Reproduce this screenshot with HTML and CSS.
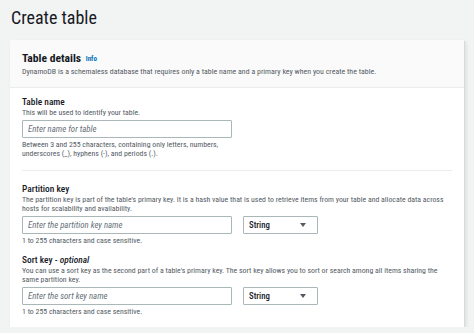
FILE: index.html
```html
<!DOCTYPE html>
<html lang="en">

<head>
    <meta charset="UTF-8">
    <meta name="viewport" content="width=device-width, initial-scale=1.0">
    <title>Create table</title>
    <link rel="stylesheet" href="styles.css">
</head>

<body>
    <main class="page">
        <h1 class="page-title">Create table</h1>

        <section class="card">
            <header class="card-header">
                <h2>Table details <a href="#" class="info">Info</a></h2>
                <p>DynamoDB is a schemaless database that requires only a table name and a primary key when you create the table.</p>
            </header>

            <div class="card-body">
                <div class="field">
                    <label class="label">Table name</label>
                    <p class="desc">This will be used to identify your table.</p>
                    <div class="control">
                        <input type="text" class="input" placeholder="Enter name for table">
                    </div>
                    <p class="hint">Between 3 and 255 characters, containing only letters, numbers,<br>underscores (_), hyphens (-), and periods (.).</p>
                </div>

                <hr class="divider">

                <div class="field">
                    <label class="label">Partition key</label>
                    <p class="desc">The partition key is part of the table's primary key. It is a hash value that is used to retrieve items from your table and allocate data across hosts for scalability and availability.</p>
                    <div class="control">
                        <input type="text" class="input" placeholder="Enter the partition key name">
                        <div class="select">String <span class="caret"></span></div>
                    </div>
                    <p class="hint">1 to 255 characters and case sensitive.</p>
                </div>

                <div class="field">
                    <label class="label">Sort key - <i>optional</i></label>
                    <p class="desc">You can use a sort key as the second part of a table's primary key. The sort key allows you to sort or search among all items sharing the same partition key.</p>
                    <div class="control">
                        <input type="text" class="input" placeholder="Enter the sort key name">
                        <div class="select">String <span class="caret"></span></div>
                    </div>
                    <p class="hint">1 to 255 characters and case sensitive.</p>
                </div>
            </div>
        </section>
    </main>
</body>

</html>
```

FILE: styles.css
```css
* {
    box-sizing: border-box;
}

body {
    margin: 0;
    background: #f2f3f3;
    font-family: "Roboto", "Liberation Sans", sans-serif;
    font-stretch: condensed;
    color: #16191f;
}

.page {
    padding: 4px 10px 0 10px;
}

.page-title {
    margin: 0 0 9px 1px;
    font-size: 18px;
    font-weight: 400;
    line-height: 27px;
}

.card {
    background: #fff;
    box-shadow: 1px 1px 0 #d5dbdb, 2px 2px 4px rgba(0, 28, 36, 0.1);
}

.card-header {
    background: #fafafa;
    border-bottom: 1px solid #eaeded;
    padding: 11px 12px 10px 12px;
}

.card-header h2 {
    margin: 0;
    font-size: 11.6px;
    font-weight: 700;
    line-height: 14px;
}

.info {
    font-size: 7px;
    font-weight: 700;
    color: #0073bb;
    text-decoration: none;
    margin-left: 2px;
    vertical-align: 1px;
}

.card-header p {
    margin: 0;
    font-size: 7.9px;
    line-height: 11px;
    color: #545b64;
}

.card-body {
    padding: 8px 12px 11px 12px;
}

.field {
    margin-bottom: 9px;
}

.field:last-child {
    margin-bottom: 0;
}

.label {
    display: block;
    font-size: 9.4px;
    font-weight: 500;
    line-height: 12px;
}

.desc {
    margin: 0 0 3px 0;
    font-size: 7.8px;
    line-height: 9px;
    color: #545b64;
}

.control {
    display: flex;
    gap: 11px;
}

.input {
    width: 210px;
    height: 18px;
    border: 1px solid #aab7b8;
    border-radius: 1px;
    padding: 0 5px;
    font-family: inherit;
    font-stretch: inherit;
    font-size: 8.8px;
}

.input::placeholder {
    color: #687078;
    font-style: italic;
}

.select {
    width: 75px;
    height: 18px;
    border: 1px solid #aab7b8;
    border-radius: 1px;
    padding: 0 11px 0 5px;
    display: flex;
    align-items: center;
    justify-content: space-between;
    font-size: 8.8px;
    font-weight: 500;
}

.caret {
    width: 0;
    height: 0;
    border-left: 3px solid transparent;
    border-right: 3px solid transparent;
    border-top: 4px solid #545b64;
}

.hint {
    margin: 2px 0 0 0;
    font-size: 7.8px;
    line-height: 9px;
    color: #545b64;
}

.divider {
    border: 0;
    border-top: 1px solid #eaeded;
    margin: 12px 0 12px 0;
}
```
